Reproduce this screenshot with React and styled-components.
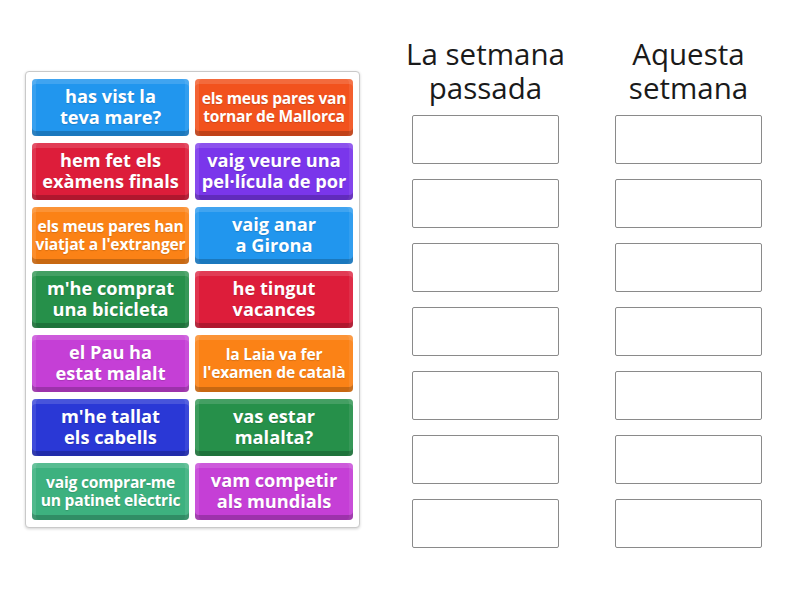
import React from 'react';
import styled, { createGlobalStyle } from 'styled-components';

const GlobalStyle = createGlobalStyle`
  html, body {
    margin: 0;
    padding: 0;
    background: #ffffff;
    font-family: "Open Sans", "Liberation Sans", sans-serif;
  }
`;

const Page = styled.div`
  display: flex;
  align-items: flex-start;
  width: 800px;
  height: 600px;
  padding: 37px 0 0 25px;
  box-sizing: border-box;
`;

const Panel = styled.div`
  margin-top: 34px;
  display: grid;
  grid-template-columns: 157px 158px;
  grid-auto-rows: 57px;
  column-gap: 6px;
  row-gap: 7px;
  padding: 7px 6px 7px 6px;
  border: 1px solid #c9c9c9;
  border-radius: 4px;
  box-shadow: 0 1px 3px rgba(0, 0, 0, 0.18);
  background: #fff;
`;

const Tile = styled.div`
  border-radius: 4px;
  background: ${(p) => p.color};
  box-shadow:
    inset 0 -5px 0 rgba(0, 0, 0, 0.2),
    inset 0 5px 0 rgba(255, 255, 255, 0.14),
    inset 4px 0 0 rgba(255, 255, 255, 0.1),
    inset -4px 0 0 rgba(255, 255, 255, 0.08);
  display: flex;
  align-items: center;
  justify-content: center;
  padding: 0 2px 2px;
  box-sizing: border-box;
  color: #fff;
  text-align: center;
  font-weight: 700;
  font-size: ${(p) => (p.small ? '15.6px' : '18.2px')};
  line-height: ${(p) => (p.small ? '18px' : '21px')};
  letter-spacing: ${(p) => (p.small ? '-0.2px' : '0')};
  white-space: nowrap;
  text-shadow: 0 1px 1px rgba(0, 0, 0, 0.15);
`;

const Columns = styled.div`
  display: flex;
  margin-left: 24px;
`;

const Column = styled.div`
  width: 203px;
  display: flex;
  flex-direction: column;
  align-items: center;
`;

const Heading = styled.div`
  font-size: 29.5px;
  line-height: 34px;
  color: #1a1a1a;
  text-align: center;
  margin-bottom: 10px;
`;

const Slots = styled.div`
  display: flex;
  flex-direction: column;
  gap: 15px;
`;

const Slot = styled.div`
  width: 147px;
  height: 49px;
  box-sizing: border-box;
  border: 1px solid #8a8a8a;
  border-radius: 2px;
  background: #fff;
`;

const tiles = [
  { text: ['has vist la', 'teva mare?'], color: '#2196ee' },
  { text: ['els meus pares van', 'tornar de Mallorca'], color: '#f2521d', small: true },
  { text: ['hem fet els', 'exàmens finals'], color: '#dd1d3a' },
  { text: ['vaig veure una', 'pel·lícula de por'], color: '#7a36eb' },
  { text: ["els meus pares han", "viatjat a l'extranger"], color: '#fb8216', small: true },
  { text: ['vaig anar', 'a Girona'], color: '#2196ee' },
  { text: ["m'he comprat", 'una bicicleta'], color: '#26904a' },
  { text: ['he tingut', 'vacances'], color: '#dd1d3a' },
  { text: ['el Pau ha', 'estat malalt'], color: '#c53fd6' },
  { text: ['la Laia va fer', "l'examen de català"], color: '#fb8216', small: true },
  { text: ["m'he tallat", 'els cabells'], color: '#2a38d6' },
  { text: ['vas estar', 'malalta?'], color: '#26904a' },
  { text: ['vaig comprar-me', 'un patinet elèctric'], color: '#3db17f', small: true },
  { text: ['vam competir', 'als mundials'], color: '#c53fd6' },
];

const columns = [
  ['La setmana', 'passada'],
  ['Aquesta', 'setmana'],
];

export default function App() {
  return (
    <>
      <GlobalStyle />
      <Page>
        <Panel>
          {tiles.map((t, i) => (
            <Tile key={i} color={t.color} small={t.small}>
              <div>
                {t.text[0]}
                <br />
                {t.text[1]}
              </div>
            </Tile>
          ))}
        </Panel>
        <Columns>
          {columns.map((c, i) => (
            <Column key={i}>
              <Heading>
                {c[0]}
                <br />
                {c[1]}
              </Heading>
              <Slots>
                {Array.from({ length: 7 }).map((_, j) => (
                  <Slot key={j} />
                ))}
              </Slots>
            </Column>
          ))}
        </Columns>
      </Page>
    </>
  );
}
